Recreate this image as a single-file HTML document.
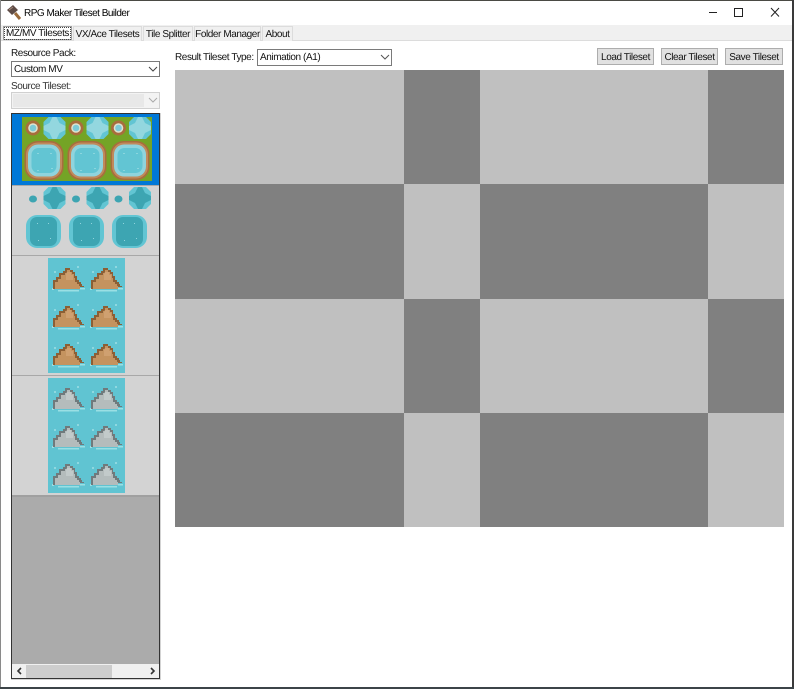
<!DOCTYPE html>
<html><head><meta charset="utf-8"><style>
html,body{margin:0;padding:0;background:#fff}
#w{position:relative;width:794px;height:689px;overflow:hidden;background:#fff;font-family:"Liberation Sans",sans-serif;font-size:10px;letter-spacing:-.42px;color:#111;text-rendering:geometricPrecision;filter:blur(.3px)}
#w div{position:absolute;box-sizing:border-box;white-space:nowrap}
.tab{top:26px;height:15px;background:#f0f0f0;border:1px solid #dcdcdc;border-bottom:0;line-height:15px;text-align:center}
.cb{background:#fff;border:1px solid #7a7a7a;line-height:16px;padding-left:2px}
.btn{top:48px;height:17px;background:#e1e1e1;border:1px solid #adadad;line-height:18px;text-align:center}
svg{position:absolute}
</style></head><body><div id="w">
<div style="left:0;top:0;width:794px;height:1px;background:#4a4a44"></div>
<div style="left:0;top:0;width:1px;height:689px;background:#8a8a8a"></div>
<div style="left:792px;top:0;width:2px;height:689px;background:#3a3a3a"></div>
<div style="left:0;top:687px;width:794px;height:2px;background:#3c4448"></div>
<svg style="left:6px;top:4px" width="16" height="17" viewBox="0 0 16 17"><path d="M9 9L14 15" stroke="#9a6a3a" stroke-width="3"/><path d="M1 6L7 1L12 6L6 11Z" fill="#5d4b45"/><path d="M3 6L7 3" stroke="#a58a7c"/></svg>
<div style="left:24px;top:6px;letter-spacing:-.5px;line-height:15px;color:#000">RPG Maker Tileset Builder</div>
<svg style="left:690px;top:5px" width="96" height="15" viewBox="0 0 96 15" fill="none" stroke="#222" stroke-width="1"><path d="M19 7.500H27"/><rect x="44.500" y="3.500" width="8" height="8"/><path d="M81 3L89 11.500M89 3L81 11.500"/></svg>

<div style="left:1px;top:25px;width:791px;height:16px;background:#f0f0f0;border-bottom:1px solid #dcdcdc"></div>
<div class="tab" style="left:3px;top:26px;width:69px;height:14px;background:#fff;border:1px solid #a0a0a0;line-height:13px"><span style="outline:1px dotted #444;padding:0 1px">MZ/MV Tilesets</span></div>
<div class="tab" style="left:73px;width:69px">VX/Ace Tilesets</div>
<div class="tab" style="left:143px;width:50px">Tile Splitter</div>
<div class="tab" style="left:194px;width:67px">Folder Manager</div>
<div class="tab" style="left:262px;width:31px">About</div>

<div style="left:11px;top:48px;line-height:12px">Resource Pack:</div>
<div class="cb" style="left:11px;top:61px;width:149px;height:16px">Custom MV</div>
<svg style="left:148px;top:65px" width="10" height="8" fill="none" stroke="#444"><path d="M1 2L5 6L9 2"/></svg>
<div style="left:11px;top:81px;line-height:12px;color:#333">Source Tileset:</div>
<div style="left:11px;top:92px;width:149px;height:17px;background:#f3f3f3;border:1px solid #d0d0d0"></div>
<div style="left:13px;top:94px;width:131px;height:13px;background:#e8e8e8"></div>
<svg style="left:148px;top:96px" width="10" height="8" fill="none" stroke="#aaa"><path d="M1 2L5 6L9 2"/></svg>

<div style="left:175px;top:52px;line-height:12px">Result Tileset Type:</div>
<div class="cb" style="left:257px;top:49px;width:135px;height:17px">Animation (A1)</div>
<svg style="left:380px;top:53px" width="10" height="8" fill="none" stroke="#555"><path d="M1 2L5 6L9 2"/></svg>
<div class="btn" style="left:597px;width:57px">Load Tileset</div>
<div class="btn" style="left:661px;width:57px">Clear Tileset</div>
<div class="btn" style="left:725px;width:58px">Save Tileset</div>

<svg style="left:175px;top:70px" width="609" height="457" shape-rendering="crispEdges">
<rect width="609" height="457" fill="#c0c0c0"/>
<g fill="#808080">
<rect x="229" y="0" width="76" height="114"/><rect x="533" y="0" width="76" height="114"/>
<rect x="0" y="114" width="229" height="115"/><rect x="305" y="114" width="228" height="115"/>
<rect x="229" y="229" width="76" height="114"/><rect x="533" y="229" width="76" height="114"/>
<rect x="0" y="343" width="229" height="114"/><rect x="305" y="343" width="228" height="114"/>
</g></svg>

<svg style="left:11px;top:113px" width="150" height="567" viewBox="11 113 150 567">
<defs>
<path id="oct" d="M5 0H17L22 5V17L17 22H5L0 17V5Z"/>
<path id="star" d="M9 0H13L16 6L22 9V13L16 16L13 22H9L6 16L0 13V9L6 6Z"/>
<g id="ring"><circle r="7.500" fill="#a86d3d"/><circle r="4.800" fill="#dfe3cf"/><circle r="3.300" fill="#7ccbd6"/></g>
<g id="big1"><rect width="39" height="39" rx="13" fill="#a86d3d"/><rect x="1.500" y="1.500" width="36" height="36" rx="12" fill="#c08a5c"/><rect x="3.500" y="3.500" width="32" height="32" rx="10" fill="#8fd4dd"/><rect x="7" y="7" width="25" height="25" rx="7" fill="#62c5d3"/><g fill="#b4e6ea"><rect x="13" y="12" width="1" height="1"/><rect x="26" y="12" width="1" height="1"/><rect x="13" y="29" width="1" height="1"/><rect x="27" y="27" width="1" height="1"/></g></g>
<g id="big2"><rect width="35" height="33" rx="11" fill="#62c5d3"/><rect x="4" y="2" width="27" height="29" rx="7" fill="#3da5b2"/><g fill="#8fd4dd"><rect x="11" y="8" width="1" height="1"/><rect x="22" y="8" width="1" height="1"/><rect x="12" y="25" width="1" height="1"/><rect x="24" y="23" width="1" height="1"/></g></g>
<path id="mo" d="M0 22V13H3V10H6V6H10V4H12V1H17V3H20V5H22V9H24V13H26V15H28V17H29V19H31V20H27V22Z"/>
<path id="mi" d="M2 22V15H5V12H8V8H12V6H14V3H17V5H19V7H21V11H22V15H24V17H26V19H27V22Z"/>
<path id="mh" d="M14 5H18V8H20V13H13V8Z"/>
<g id="ms"><rect x="5" y="23" width="21" height="1.500" fill="#9adfe4"/><rect x="-1" y="21" width="2" height="2" fill="#9adfe4"/><rect x="27" y="21" width="5" height="1.500" fill="#9adfe4"/><rect x="1" y="4" width="2" height="2" fill="#8fd8e0"/><rect x="24" y="-1" width="2" height="2" fill="#8fd8e0"/></g>
<g id="brown"><use href="#ms"/><use href="#mo" fill="#8c5f35"/><use href="#mi" fill="#c4935f"/><use href="#mh" fill="#cfa070"/></g>
<g id="gray"><use href="#ms"/><use href="#mo" fill="#707a7c"/><use href="#mi" fill="#b4bcbc"/><use href="#mh" fill="#c2caca"/></g>
</defs>
<rect x="11" y="113" width="150" height="567" fill="#d3d3d3"/>
<rect x="12" y="497" width="148" height="167" fill="#ababab"/>
<rect x="12" y="114" width="147" height="71" fill="#0078d7"/>
<rect x="22" y="117" width="130" height="64" fill="#74a426"/>
<use href="#ring" x="33" y="128"/><use href="#ring" x="76" y="128"/><use href="#ring" x="118.500" y="128"/>
<g fill="#62c5d3"><use href="#oct" x="43.500" y="117"/><use href="#oct" x="86.500" y="117"/><use href="#oct" x="129" y="117"/></g>
<g fill="#93d7df"><use href="#star" x="43.500" y="117"/><use href="#star" x="86.500" y="117"/><use href="#star" x="129" y="117"/></g>
<use href="#big1" x="24.500" y="141"/><use href="#big1" x="67.500" y="141"/><use href="#big1" x="110.500" y="141"/>
<rect x="12" y="185" width="148" height="1" fill="#a8a8a8"/>
<ellipse cx="33" cy="199" rx="4" ry="3.500" fill="#3da5b2"/><ellipse cx="76" cy="199" rx="4" ry="3.500" fill="#3da5b2"/><ellipse cx="118.500" cy="199" rx="4" ry="3.500" fill="#3da5b2"/>
<g fill="#62c5d3"><use href="#oct" x="43.500" y="187"/><use href="#oct" x="86.500" y="187"/><use href="#oct" x="129" y="187"/></g>
<g fill="#3da5b2"><use href="#star" x="43.500" y="187"/><use href="#star" x="86.500" y="187"/><use href="#star" x="129" y="187"/></g>
<use href="#big2" x="26" y="215"/><use href="#big2" x="69" y="215"/><use href="#big2" x="112" y="215"/>
<rect x="12" y="255" width="148" height="1" fill="#a8a8a8"/>
<rect x="48" y="258" width="77" height="115" fill="#60c4d2"/>
<g shape-rendering="crispEdges">
<use href="#brown" x="53" y="267"/><use href="#brown" x="91" y="267"/>
<use href="#brown" x="53" y="305"/><use href="#brown" x="91" y="305"/>
<use href="#brown" x="53" y="343"/><use href="#brown" x="91" y="343"/>
</g>
<rect x="12" y="375" width="148" height="1" fill="#a8a8a8"/>
<rect x="48" y="378" width="77" height="115" fill="#60c4d2"/>
<g shape-rendering="crispEdges">
<use href="#gray" x="53" y="387"/><use href="#gray" x="91" y="387"/>
<use href="#gray" x="53" y="425"/><use href="#gray" x="91" y="425"/>
<use href="#gray" x="53" y="463"/><use href="#gray" x="91" y="463"/>
</g>
<rect x="12" y="495" width="148" height="2" fill="#a0a0a0"/>
<rect x="12" y="664" width="148" height="15" fill="#f0f0f0"/>
<rect x="26" y="665" width="86" height="13" fill="#cdcdcd"/>
<path d="M21 668L18 671L21 674M151 668L154 671L151 674" fill="none" stroke="#333" stroke-width="1.600"/>
<rect x="11.500" y="113.500" width="148" height="565" fill="none" stroke="#333"/>
</svg>
</div></body></html>
